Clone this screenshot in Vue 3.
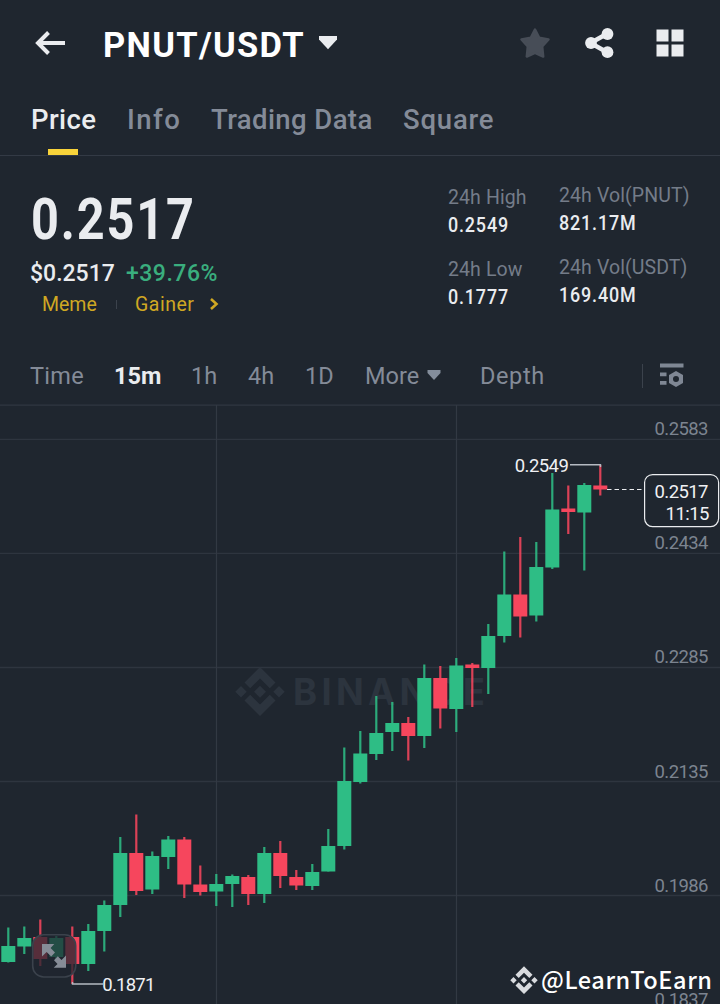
<script setup>
const up = '#2ebd85'
const down = '#f6465d'

// [high, body top, body bottom, low, rising]
const candles = [
  [927.5, 946, 962, 962.5, 1], [926.5, 938, 946.5, 954, 1], [919.5, 937, 959, 966, 0],
  [936, 938, 957, 959, 1], [926.5, 937, 964, 984, 0], [924, 931, 964, 971, 1],
  [900.5, 905, 931, 951.5, 1], [837, 853, 905, 917, 1], [814.5, 853, 891, 895, 0],
  [851.5, 856, 889.5, 894, 1], [836, 839.5, 857, 869, 1], [837, 839.5, 884.5, 898, 0],
  [865.5, 884.5, 892, 895.5, 0], [874, 884, 891.5, 906, 1], [874.5, 876, 884, 907, 1],
  [875, 877, 894, 905, 0], [847, 853, 894, 903, 1], [841, 853, 876, 888, 0],
  [870, 877, 885.5, 890, 0], [864, 872, 886, 890, 1], [829, 846, 871.5, 871.5, 1],
  [747.5, 781, 846, 849.5, 1], [731, 753.5, 782, 783.5, 1], [696, 733, 754, 760, 1],
  [702, 723, 732, 751, 1], [717, 723, 736, 760.5, 0], [664.5, 678, 736, 748, 1],
  [666, 678, 708.5, 728.5, 0], [658, 665.5, 709, 732, 1], [663, 664.5, 668, 707, 0],
  [624, 636, 668, 694, 1], [551.5, 594.5, 636, 642.5, 1], [537, 594.5, 616.5, 637.5, 0],
  [542, 567, 615.5, 621.5, 1], [473, 509.5, 567.5, 569, 1], [485.5, 508.5, 512, 534, 0],
  [483, 485, 512.5, 570.5, 1], [465, 485.5, 489.5, 495.5, 0],
].map(([high, top, bottom, low, rising], i) => ({
  x: 8.3 + i * 16, high, top, bottom, low, color: rising ? up : down,
}))

const axis = [
  ['0.2583', 435], ['0.2434', 549], ['0.2285', 663],
  ['0.2135', 778], ['0.1986', 892], ['0.1837', 1006],
]
const rows = [439.3, 553.3, 667.5, 781.5, 895.5]
const tabs = ['Price', 'Info', 'Trading Data', 'Square']
const periods = ['Time', '15m', '1h', '4h', '1D']
const stats = [
  ['24h High', '0.2549', 'high'], ['24h Vol(PNUT)', '821.17M', 'vol'],
  ['24h Low', '0.1777', 'low'], ['24h Vol(USDT)', '169.40M', 'vol2'],
]
</script>

<template>
  <main class="screen">
    <header class="top">
      <svg class="back" width="32" height="26" viewBox="0 0 32 26">
        <path d="M3.500 13H31M14.500 2.500L4 13l10.500 10.500" fill="none" stroke="#eaecef" stroke-width="4" />
      </svg>
      <h1>PNUT/USDT</h1>
      <svg class="caret" width="20" height="16" viewBox="0 0 20 16">
        <path d="M1 1h18v3.500L10 14.300 1 4.500z" fill="#eaecef" />
      </svg>
      <svg class="star" width="32" height="32" viewBox="0 0 32 32">
        <path d="M16 2.500l4.200 8.300 9.300 1.700-6.300 7 1 10-8.200-3.700-8.200 3.700 1-10-6.300-7 9.300-1.700z" fill="#474d57" stroke="#474d57" stroke-width="2.500" stroke-linejoin="round" />
      </svg>
      <svg class="share" width="30" height="32" viewBox="0 0 30 32">
        <path d="M23.500 6.500L6.500 16l17 9.500" fill="none" stroke="#eaecef" stroke-width="4.500" />
        <circle cx="23.500" cy="7" r="5.900" fill="#eaecef" /><circle cx="7" cy="16" r="5.900" fill="#eaecef" /><circle cx="23.500" cy="25.200" r="5.900" fill="#eaecef" />
      </svg>
      <svg class="apps" width="28" height="28" viewBox="0 0 28 28">
        <path d="M.5.500h12v12H.5zM15.500.500h12v12h-12zM.5 15.500h12v12H.5zM15.500 15.500h12v12h-12z" fill="#eaecef" />
      </svg>
    </header>

    <nav class="tabs">
      <a v-for="(t, i) in tabs" :key="t" :class="['tab', 't' + i, { active: i === 0 }]">{{ t }}</a>
    </nav>

    <section class="summary">
      <div class="quote">
        <div class="price">0.2517</div>
        <div class="change"><span class="fiat">$0.2517</span><span class="gain">+39.76%</span></div>
        <div class="tags">
          <span class="meme">Meme</span><i></i><span class="gainer">Gainer</span>
          <svg width="10" height="14" viewBox="0 0 10 14"><path d="M2 2l5.500 5L2 12" fill="none" stroke="#d0a823" stroke-width="2.600" /></svg>
        </div>
      </div>
      <dl class="stats">
        <div v-for="s in stats" :key="s[0]" :class="s[2]"><dt>{{ s[0] }}</dt><dd>{{ s[1] }}</dd></div>
      </dl>
    </section>

    <nav class="periods">
      <span v-for="(p, i) in periods" :key="p" :class="['period', 'p' + i, { active: i === 1 }]">{{ p }}</span>
      <span class="period more">More</span>
      <svg class="drop" width="14" height="12" viewBox="0 0 14 12"><path d="M.5 0h13v3L7 10 .5 3z" fill="#848e9c" /></svg>
      <span class="period depth">Depth</span>
      <i class="rule"></i>
      <svg class="config" width="26" height="26" viewBox="0 0 26 26">
        <path d="M1 .5h23.500v4H1zM1 9.500h6.500v3.800H1zM1 18h6.500v3.800H1z" fill="#7f8794" />
        <path d="M17 8l7 4v8l-7 4-7-4v-8z M17 13a3 3 0 1 0 0 6a3 3 0 1 0 0-6z" fill="#7f8794" fill-rule="evenodd" />
      </svg>
    </nav>

    <svg class="chart" width="720" height="600" viewBox="0 404 720 600">
      <path d="M0 405.200H720" stroke="#2b323c" stroke-width="1.800" />
      <path v-for="y in rows" :key="y" :d="`M0 ${y}H720`" stroke="#2e353f" stroke-width="1.300" />
      <path d="M216.500 405V1004M456.500 405V1004" stroke="#323943" stroke-width="1.200" />

      <g class="watermark" fill="#2c343e">
        <path d="M260 667l15.500 15.500-5.700 5.700-9.800-9.800-9.800 9.800-5.700-5.700zM260 716l-15.500-15.500 5.700-5.700 9.800 9.800 9.800-9.800 5.700 5.700zM241 686l5.700 5.700-5.700 5.700-5.700-5.700zM279 686l5.700 5.700-5.700 5.700-5.700-5.700zM260 685.700l6 6-6 6-6-6z" />
        <text x="293" y="704.500" textLength="192">BINANCE</text>
      </g>

      <g v-for="c in candles" :key="c.x" :fill="c.color">
        <rect :x="c.x - 1.100" :y="c.high" width="2.200" :height="c.low - c.high" opacity=".88" />
        <rect :x="c.x - 7" :y="c.top" width="14" :height="c.bottom - c.top" />
      </g>

      <g class="axis">
        <text v-for="a in axis" :key="a[0]" x="654.500" :y="a[1]" textLength="54" lengthAdjust="spacing">{{ a[0] }}</text>
      </g>

      <g class="mark">
        <path d="M570 464.700h30.500V467M72.500 982v2H103" fill="none" stroke="#b5bac2" stroke-width="1.400" />
        <text x="514.800" y="472" textLength="54">0.2549</text>
        <text x="102.300" y="991" textLength="53">0.1871</text>
        <path d="M607 489.500H644" stroke="#eaecef" stroke-width="1.200" stroke-dasharray="4.500 3" />
        <rect x="644.600" y="474.600" width="74" height="52" rx="8" fill="#1f262f" stroke="#eaecef" stroke-width="1.200" />
        <text x="654.500" y="498" textLength="54">0.2517</text>
        <text x="665.500" y="520" textLength="44">11:15</text>
      </g>

      <g class="expand">
        <rect x="32.700" y="934.700" width="43" height="42.300" rx="11" fill="#1f262f" fill-opacity=".74" stroke="#3b424c" stroke-width="1.600" />
        <path d="M42 944h12.300l-3.700 3.900 4.400 4.600-3.800 4-4.600-4.600-4.600 4.600zM66 967.800H53.700l3.800-3.900-3.500-3.600 3.800-4 3.700 3.700 4.500-4.500z" fill="#868c97" />
      </g>

      <g class="credit">
        <path d="M524 966.300l8.500 8.500-3.200 3.200-5.300-5.300-5.300 5.300-3.200-3.200zM524 994l-8.500-8.500 3.200-3.200 5.300 5.300 5.300-5.300 3.200 3.200zM513.500 977l3.200 3.200-3.200 3.200-3.200-3.200zM534.500 977l3.200 3.200-3.200 3.200-3.200-3.200zM524 977l3.200 3.200-3.200 3.200-3.200-3.200z" fill="#d9dbdf" />
        <text x="541" y="989" textLength="171">@LearnToEarn</text>
      </g>
    </svg>
  </main>
</template>

<style>
body { margin: 0; background: #1f262f; }
</style>

<style scoped>
.screen { width: 720px; height: 1004px; overflow: hidden; background: #1f262f; color: #eaecef; font-family: Roboto, "Liberation Sans", sans-serif; white-space: nowrap; }
.top { display: flex; align-items: center; height: 88px; box-sizing: border-box; padding: 0 36px 2px 34px; }
h1 { width: 197px; margin: 4px 0 0 37px; font-size: 34.5px; line-height: 40px; font-weight: 700; letter-spacing: 1.3px; color: #fff; }
.caret { margin-left: 18px; }
.star { margin-left: 181px; }
.share { margin-left: 33px; }
.apps { margin-left: 42px; }
.tabs { display: flex; height: 67px; padding-left: 31px; border-bottom: 1px solid #333a45; }
.tab { box-sizing: border-box; height: 67px; padding-top: 16px; font-size: 27.5px; line-height: 32px; font-weight: 500; color: #848b98; }
.tab.active { color: #eaecef; position: relative; letter-spacing: .4px; }
.tab.active::after { content: ""; position: absolute; left: 17px; bottom: 0; width: 30px; height: 6px; background: #f8d33a; }
.t0 { width: 96px; }
.t1 { width: 84px; letter-spacing: 1.5px; }
.t2 { width: 192px; letter-spacing: .4px; }
.t3 { letter-spacing: .8px; }
.summary { display: flex; height: 192px; }
.quote { width: 448px; padding-left: 31px; box-sizing: border-box; }
.price { margin-top: 31px; height: 64px; font-size: 56.5px; line-height: 66px; font-weight: 700; letter-spacing: 2.2px; transform: scaleX(.86); transform-origin: left; }
.change { display: flex; height: 30px; margin-top: 8px; font-size: 23px; line-height: 30px; font-weight: 500; }
.fiat { width: 96px; margin-left: -1px; }
.gain { color: #3aae7e; letter-spacing: .5px; }
.tags { display: flex; align-items: center; height: 30px; padding-left: 11px; font-size: 19.5px; color: #d0a823; }
.meme { width: 74px; }
.tags i { width: 1px; height: 9px; margin-right: 18px; background: #3b424c; }
.gainer { width: 74px; letter-spacing: .5px; }
.stats { display: grid; grid-template-columns: 111px 150px; grid-template-rows: 72px 72px; margin: 28px 0 0; }
dt { font-size: 19.500px; line-height: 24px; color: #747c89; letter-spacing: .1px; }
dd { margin: 4px 0 0; font-size: 19.500px; line-height: 24px; font-weight: 500; letter-spacing: .9px; transform: scaleX(.92); transform-origin: left; }
.high { padding-top: 2px; }
.low { padding-top: 2px; }
.periods { display: flex; align-items: center; height: 56px; padding-left: 30px; }
.period { font-size: 23.500px; line-height: 30px; color: #848b98; }
.period.active { color: #eaecef; font-weight: 700; }
.p0 { width: 84px; letter-spacing: .3px; }
.p1 { width: 77px; }
.p2 { width: 57px; }
.p3 { width: 57px; }
.p4 { width: 60px; }
.more { width: 62px; }
.depth { width: 162px; margin-left: 39px; letter-spacing: .6px; }
.rule { width: 1px; height: 24px; margin-right: 16px; background: #3b424c; }
.chart { display: block; }
.watermark text { font: 700 36.500px Inter, sans-serif; }
.axis text { font-size: 18.500px; fill: #7c8490; }
.mark text { font-size: 18.500px; fill: #f0f1f4; }
.credit text { font: 500 23.500px "Noto Sans CJK SC", sans-serif; fill: #fff; paint-order: stroke; stroke: #1f262f; stroke-width: 2px; }
</style>
